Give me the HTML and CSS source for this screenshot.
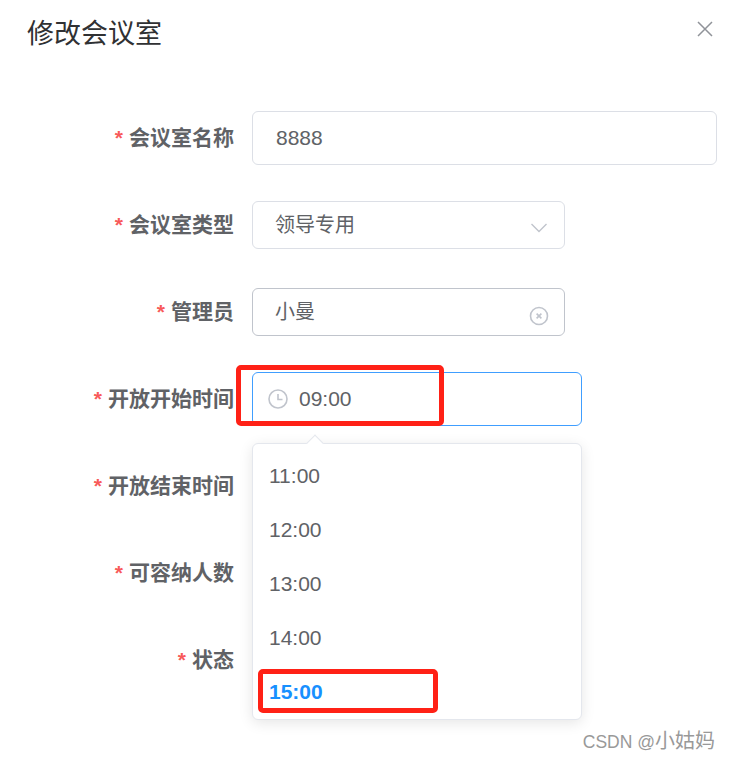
FILE: index.html
```html
<!DOCTYPE html>
<html lang="zh-CN">
    <head>
        <meta charset="UTF-8" />
        <meta name="viewport" content="width=device-width, initial-scale=1.0" />
        <title>修改会议室</title>
        <link rel="stylesheet" href="styles.css">
    </head>
    <body>
        <main class="dialog">
            <header class="dialog-header">
                <h1>修改会议室</h1>
                <svg class="close-icon" viewBox="0 0 16 16" width="16" height="16">
                    <path d="M1 1 15 15M15 1 1 15" />
                </svg>
            </header>
            <form class="form">
                <div class="form-row row-tall">
                    <label class="form-label">会议室名称</label>
                    <div class="field field-full">8888</div>
                </div>
                <div class="form-row row-short">
                    <label class="form-label">会议室类型</label>
                    <div class="field field-select">
                        <span class="cjk-value">领导专用</span>
                        <svg class="field-icon" viewBox="0 0 16 10" width="16" height="10">
                            <path d="M.5 1 8 8.5 15.5 1" />
                        </svg>
                    </div>
                </div>
                <div class="form-row row-short row-hover">
                    <label class="form-label">管理员</label>
                    <div class="field field-select field-hover">
                        <span class="cjk-value">小曼</span>
                        <svg class="field-icon" viewBox="0 0 20 20" width="20" height="20">
                            <circle cx="10" cy="10" r="8.5" />
                            <path d="M7.6 7.6 12.4 12.4M12.4 7.6 7.6 12.4" />
                        </svg>
                    </div>
                </div>
                <div class="form-row row-tall">
                    <label class="form-label">开放开始时间</label>
                    <div class="field field-time">
                        <svg class="clock-icon" viewBox="0 0 20 20" width="20" height="20">
                            <circle cx="10" cy="10" r="9" />
                            <path d="M10 5v5.5h4.5" />
                        </svg>
                        <span>09:00</span>
                        <div class="mark mark-input"></div>
                        <div class="time-popup">
                            <div class="popup-arrow"></div>
                            <div class="time-item">11:00</div>
                            <div class="time-item">12:00</div>
                            <div class="time-item">13:00</div>
                            <div class="time-item">14:00</div>
                            <div class="time-item selected">15:00</div>
                            <div class="mark mark-item"></div>
                        </div>
                    </div>
                </div>
                <div class="form-row row-tall">
                    <label class="form-label">开放结束时间</label>
                </div>
                <div class="form-row row-tall">
                    <label class="form-label">可容纳人数</label>
                </div>
                <div class="form-row row-tall">
                    <label class="form-label">状态</label>
                </div>
            </form>
        </main>
        <div class="watermark"><span class="watermark-latin">CSDN @</span>小姑妈</div>
    </body>
</html>
```

FILE: styles.css
```css
* {
    margin: 0;
    padding: 0;
    box-sizing: border-box;
}
body {
    font-family: "Liberation Sans", "Noto Sans CJK SC", sans-serif;
    background: #fff;
    color: #606266;
    height: 761px;
    overflow: hidden;
    position: relative;
}
.dialog-header {
    display: flex;
    justify-content: space-between;
    align-items: flex-start;
    height: 111px;
    padding: 13px 17px 0 27px;
}
h1 {
    margin-top: 2px;
    color: #303133;
    font-size: 27px;
    font-weight: 400;
    line-height: 38px;
}
.close-icon {
    margin-top: 8px;
    fill: none;
    stroke: #909399;
    stroke-width: 1.5;
}
.form-row {
    display: flex;
    align-items: center;
    gap: 18px;
    height: 54px;
    margin-bottom: 33px;
}
.form-row:first-child {
    margin-bottom: 36px;
}
.form-row.row-short {
    height: 48px;
    margin-bottom: 39px;
}
.form-row.row-hover {
    margin-bottom: 36px;
}
.form-label {
    width: 234px;
    padding-bottom: 4px;
    text-align: right;
    color: #606266;
    font-size: 21px;
    font-weight: 700;
}
.form-label::before {
    content: "*";
    margin-right: 6px;
    color: #f85a5a;
    font-family: "Liberation Sans", sans-serif;
    font-weight: 700;
}
.field {
    display: flex;
    align-items: center;
    height: 100%;
    padding: 0 23px;
    font-size: 21px;
    border: 1px solid #dcdfe6;
    border-radius: 6px;
    background: #fff;
}
.field-full {
    width: 465px;
}
.field-select {
    justify-content: space-between;
    width: 313px;
    padding-right: 17px;
}
.cjk-value {
    margin-left: -1px;
    padding-bottom: 4px;
    font-size: 20px;
}
.field-hover {
    border-color: #c0c4cc;
    padding-right: 15px;
}
.field-icon {
    margin-top: 6px;
    fill: none;
    stroke: #c0c4cc;
    stroke-width: 1.4;
}
.field-select.field-hover .field-icon {
    margin-top: 8px;
    stroke-width: 1.6;
}
.field-time {
    position: relative;
    gap: 11px;
    width: 330px;
    padding: 0 15px;
    border-color: #409eff;
}
.clock-icon {
    fill: none;
    stroke: #c0c4cc;
    stroke-width: 1.6;
}
.time-popup {
    position: absolute;
    top: 70px;
    left: -1px;
    width: 330px;
    height: 277px;
    padding-top: 5px;
    border: 1px solid #e4e7ed;
    border-radius: 6px;
    background: #fff;
    box-shadow: 0 3px 14px rgba(0, 0, 0, 0.1);
    z-index: 2;
}
.popup-arrow {
    position: absolute;
    top: -7px;
    left: 56px;
    width: 12px;
    height: 12px;
    background: #fff;
    border-top: 1px solid #e4e7ed;
    border-left: 1px solid #e4e7ed;
    transform: rotate(45deg);
}
.time-item {
    height: 54px;
    padding-left: 16px;
    line-height: 54px;
    font-size: 21px;
}
.time-item.selected {
    color: #1890ff;
    font-weight: 700;
}
.mark {
    position: absolute;
    border: 5px solid #ff2116;
    border-radius: 5px;
    z-index: 3;
}
.mark-input {
    top: -8px;
    left: -17px;
    width: 208px;
    height: 61px;
}
.mark-item {
    top: 225px;
    left: 5px;
    width: 180px;
    height: 44px;
}
.watermark {
    position: absolute;
    right: 15px;
    top: 727px;
    color: #999;
    font-size: 20px;
    line-height: 28px;
}
.watermark-latin {
    font-size: 17.5px;
}
```
